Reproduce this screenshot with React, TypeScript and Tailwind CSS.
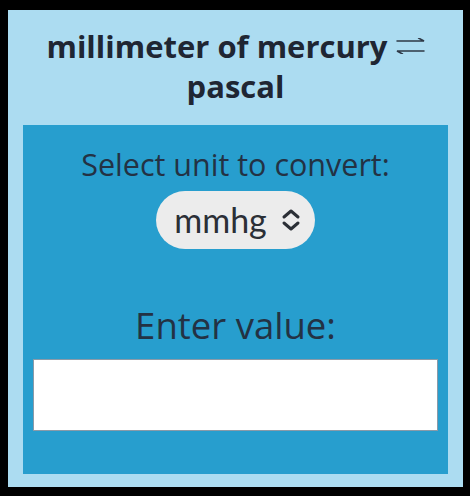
import React from 'react';

function UpDown() {
	return (
		<svg width="20" height="24" viewBox="0 0 20 24" fill="none" stroke="#2b2f36" strokeWidth="3" strokeLinecap="round" strokeLinejoin="round">
			<path d="M3 9 L10 3 L17 9" />
			<path d="M3 15 L10 21 L17 15" />
		</svg>
	);
}

function Harpoons() {
	return (
		<svg className="inline-block align-[4px]" width="29" height="16" viewBox="0 0 29 16" fill="none" stroke="#2e3846" strokeWidth="1.5" strokeLinecap="round">
			<path d="M1 3 H28 L22.5 0" />
			<path d="M28 13 H1 L6.5 16" />
		</svg>
	);
}

export default function App() {
	return (
		<div className="w-[470px] h-[496px] bg-black pt-[10px] pl-2 pr-[7px] pb-[9px]" style={{ fontFamily: '"Open Sans", sans-serif' }}>
			<div className="flex h-full flex-col bg-[#acdcf1] px-[15px] pb-[13px]">
				<h1 className="pt-[16px] pb-[19px] text-center text-[31px] font-bold leading-[40px] text-[#1f2633]">
					millimeter of mercury <Harpoons />
					<br />
					pascal
				</h1>
				<div className="flex flex-1 flex-col items-center bg-[#279ece] px-[10px] text-[#233244]">
					<p className="mt-[19px] text-[30.5px] leading-[40px]">Select unit to convert:</p>
					<div className="mt-[7px] flex h-[58px] w-[159px] items-center justify-center gap-[14px] rounded-full bg-[#ececec] pl-1 text-[#2b2f36]">
						<span className="text-[34px] leading-none" style={{ fontFamily: 'Lato, sans-serif' }}>mmhg</span>
						<UpDown />
					</div>
					<p className="mt-[51px] text-[36.5px] leading-[50px]">Enter value:</p>
					<input className="mt-[9px] h-[72px] w-full border border-[#8a9aa8] bg-white outline-none" />
				</div>
			</div>
		</div>
	);
}
